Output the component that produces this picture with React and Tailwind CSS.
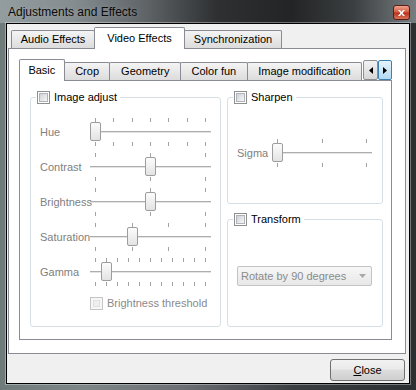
import React from "react";

const ROWS = [
  { label: "Hue", ticks: 7, pos: 0 },
  { label: "Contrast", ticks: 3, pos: 55 },
  { label: "Brightness", ticks: 3, pos: 55 },
  { label: "Saturation", ticks: 4, pos: 37 },
  { label: "Gamma", ticks: 11, pos: 11 },
];

const INNER_TABS = [
  { label: "Basic", w: "w-[46px]", selected: true },
  { label: "Crop", w: "w-[47px]" },
  { label: "Geometry", w: "w-[72px]" },
  { label: "Color fun", w: "w-[68px]" },
  { label: "Image modification", w: "w-[116px]" },
];

const OUTER_TABS = [
  { label: "Audio Effects", w: "w-[84px]" },
  { label: "Video Effects", w: "w-[91px]", selected: true },
  { label: "Synchronization", w: "w-[98px]" },
];

function Check({ disabled = false }) {
  if (disabled) {
    return (
      <span className="flex w-[13px] h-[13px] shrink-0 border border-[#c5c5c5] bg-[#f6f6f6] p-[2px]">
        <span className="flex-1 border border-[#e0e0e0] bg-[#efefef]" />
      </span>
    );
  }
  return (
    <span className="flex w-[13px] h-[13px] shrink-0 border border-[#8e8f8f] bg-white p-[1px]">
      <span className="flex-1 border border-[#b0b4ba] bg-gradient-to-br from-[#cfd2d7] to-[#f7f7f7]" />
    </span>
  );
}

function Tab({ label, w, selected, first }) {
  if (selected) {
    return (
      <div className={`relative z-10 ${w} ${first ? "" : "-ml-px"} h-[22px] -mb-px flex items-center justify-center rounded-t-[2px] border border-b-0 border-[#898c95] bg-white pb-[1px] text-black`}>
        {label}
      </div>
    );
  }
  return (
    <div className={`${w} ${first ? "" : "-ml-px"} h-[18px] flex items-center justify-center rounded-t-[2px] border border-b-0 border-[#898c95] bg-gradient-to-b from-[#f4f4f4] to-[#dcdcdc] text-black`}>
      {label}
    </div>
  );
}

function Ticks({ count }) {
  return (
    <div className="flex justify-between px-[5px] h-[4px]">
      {Array.from({ length: count }).map((_, i) => (
        <span key={i} className="w-px h-full bg-[#a3a3a3]" />
      ))}
    </div>
  );
}

function Slider({ ticks, pos, w }) {
  return (
    <div className={`flex flex-col ${w}`}>
      <Ticks count={ticks} />
      <div className="relative h-[19px] flex items-center">
        <div className="w-full h-[2px] border-t border-[#adadad] bg-[#e4e4e4]" />
        <span
          className="absolute top-0 h-[19px] w-[11px] rounded-[2px] border border-[#9d9d9d] bg-gradient-to-b from-[#fcfcfc] to-[#e3e3e3]"
          style={{ left: pos }}
        />
      </div>
      <div className="mt-[1px]">
        <Ticks count={ticks} />
      </div>
    </div>
  );
}

function Group({ title, className, children }) {
  return (
    <fieldset className={`min-w-0 rounded-[3px] border border-[#d5dfe5] ${className}`}>
      <legend className="ml-[5px] pl-[1px] pr-[3px] h-[14px] flex items-center gap-[4px] text-black">
        <Check />
        <span>{title}</span>
      </legend>
      {children}
    </fieldset>
  );
}

function Arrow({ dir }) {
  return (
    <svg width="4" height="7" viewBox="0 0 4 7">
      <path d={dir === "left" ? "M4 0v7L0 3.5z" : "M0 0v7l4-3.5z"} fill="#000" />
    </svg>
  );
}

export default function App() {
  return (
    <div className="w-[416px] h-[390px] flex flex-col bg-[linear-gradient(90deg,#6f7b7b_0%,#7d8686_20%,#6b6f73_45%,#3b3f42_70%,#2c2f31_100%)] font-['Liberation_Sans',Arial,sans-serif] text-[11px] leading-none select-none">
      {/* title bar */}
      <div className="h-[23px] shrink-0 flex items-start justify-between pl-[8px] pr-[6px] bg-[linear-gradient(90deg,#939c9f_0%,#848c8f_18%,#5f6467_35%,#2e3032_52%,#222425_70%,#3c3f41_85%,#767d80_100%)]">
        <span className="mt-[5px] text-[12px] leading-[14px] text-[#0a0a0a] [text-shadow:0_0_5px_rgba(255,255,255,0.25)]">
          Adjustments and Effects
        </span>
        <div className="mt-[5px] w-[17px] h-[15px] flex items-center justify-center rounded-[3px] border border-[#5e1d12] bg-[linear-gradient(#eda38f,#d45a3e_48%,#b8301a_52%,#d9735a)]">
          <svg width="7" height="6" viewBox="0 0 7 6">
            <path d="M0 0h2l1.5 2L5 0h2L4.5 3 7 6H5L3.5 4 2 6H0l2.5-3z" fill="#fff" />
          </svg>
        </div>
      </div>

      {/* client area */}
      <div className="flex-1 mx-[6px] mb-[6px] border border-black shadow-[0_0_0_1px_rgba(255,255,255,0.35)] bg-[#f0f0f0] flex flex-col pl-[1px] pr-[3px] pt-[3px]">
        <div className="flex items-end pl-[3px] h-[21px]">
          {OUTER_TABS.map((t, i) => (
            <Tab key={t.label} {...t} first={i === 0} />
          ))}
        </div>

        <div className="h-[306px] border border-[#898c95] bg-white pt-[10px] pl-[10px]">
          <div className="w-[373px] flex flex-col">
            <div className="flex items-end h-[21px]">
              {INNER_TABS.map((t, i) => (
                <Tab key={t.label} {...t} first={i === 0} />
              ))}
              <div className="self-start mt-[1px] ml-[1px] flex">
                <div className="w-[15px] h-[20px] flex items-center justify-center rounded-[2px] border border-[#8e8f8f] bg-gradient-to-b from-[#f3f3f3] to-[#d7d7d7]">
                  <Arrow dir="left" />
                </div>
                <div className="w-[14px] h-[20px] flex items-center justify-center rounded-[2px] border border-[#3c7fb1] bg-gradient-to-b from-[#e6f4fc] to-[#b3daf2]">
                  <Arrow dir="right" />
                </div>
              </div>
            </div>

            <div className="h-[260px] border border-[#898c95] bg-white flex gap-[6px] pt-[9px] pl-[10px]">
              <Group title="Image adjust" className="w-[191px] h-[237px]">
                <div className="flex flex-col gap-[7px] pt-[14px] pl-[9px]">
                  {ROWS.map((r) => (
                    <div key={r.label} className="flex items-center">
                      <span className="w-[50px] whitespace-nowrap text-[#808080]">{r.label}</span>
                      <Slider ticks={r.ticks} pos={r.pos} w="w-[121px]" />
                    </div>
                  ))}
                  <div className="mt-[4px] ml-[50px] flex items-center gap-[4px] text-[#8a8a8a]">
                    <Check disabled />
                    <span>Brightness threshold</span>
                  </div>
                </div>
              </Group>

              <div className="w-[156px] flex flex-col gap-[8px]">
                <Group title="Sharpen" className="h-[114px]">
                  <div className="pt-[35px] pl-[9px] flex items-center">
                    <span className="w-[35px] text-[#808080]">Sigma</span>
                    <Slider ticks={3} pos={0} w="w-[100px]" />
                  </div>
                </Group>
                <Group title="Transform" className="h-[115px]">
                  <div className="mt-[40px] ml-[9px] w-[135px] h-[20px] flex items-center justify-between rounded-[2px] border border-[#c3c3c3] bg-gradient-to-b from-[#f7f7f7] to-[#e8e8e8] pl-[3px] pr-[5px] text-[#8b8b8b]">
                    <span>Rotate by 90 degrees</span>
                    <svg width="7" height="4" viewBox="0 0 7 4">
                      <path d="M0 0h7L3.5 4z" fill="#a9a9a9" />
                    </svg>
                  </div>
                </Group>
              </div>
            </div>
          </div>
        </div>

        <div className="flex justify-end pr-[1px] mt-[5px]">
          <button className="w-[75px] h-[22px] flex items-center justify-center rounded-[3px] border border-[#707070] bg-[linear-gradient(#f2f2f2,#ebebeb_45%,#dddddd_50%,#cfcfcf)] text-black">
            <span className="underline">C</span>lose
          </button>
        </div>
      </div>
    </div>
  );
}
